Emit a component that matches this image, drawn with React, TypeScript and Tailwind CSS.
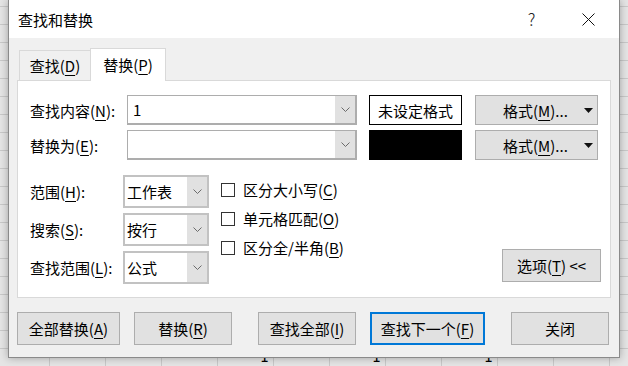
import React from 'react';

const FONT = "font-['Noto_Sans_CJK_SC','Noto_Sans',sans-serif]";

const Key = ({ k }: { k: string }) => <span className="underline underline-offset-[3px] decoration-1">{k}</span>;

const Chevron = () => (
  <svg width="9" height="5" viewBox="0 0 9 5">
    <polyline points="0.5,0.5 4.5,4.5 8.5,0.5" fill="none" stroke="#6b6b6b" strokeWidth="1" />
  </svg>
);

const Caret = () => (
  <svg width="9" height="5" viewBox="0 0 9 5">
    <polygon points="0,0 9,0 4.5,5" fill="#111" />
  </svg>
);

const TextCombo = ({ value }: { value?: string }) => (
  <div className="flex h-[30px] w-[230px] border border-[#adadad] border-r-2 border-b-2 bg-white">
    <div className="flex flex-1 items-center pl-[5px] leading-none">{value}</div>
    <div className="flex w-[20px] items-center justify-center bg-[#e1e1e1]">
      <Chevron />
    </div>
  </div>
);

const Combo = ({ value }: { value: string }) => (
  <div className="flex h-[33px] w-[86px] border-2 border-[#c2c2c2] bg-white">
    <div className="flex flex-1 items-center pl-[2px] leading-none">{value}</div>
    <div className="flex w-[20px] items-center justify-center bg-[#e1e1e1]">
      <Chevron />
    </div>
  </div>
);

const FormatButton = () => (
  <div className="flex h-[30px] w-[123px] items-center border border-[#adadad] bg-[#e1e1e1] pl-[27px] pr-[4px] leading-none">
    <span>
      格式(<Key k="M" />)...
    </span>
    <span className="ml-auto flex">
      <Caret />
    </span>
  </div>
);

const Check = ({ children }: { children: React.ReactNode }) => (
  <div className="flex h-[29px] items-center gap-[8px] leading-none">
    <div className="h-[14px] w-[14px] border border-[#333] bg-white" />
    <span>{children}</span>
  </div>
);

const Button = ({ w, main, children }: { w: string; main?: boolean; children: React.ReactNode }) => (
  <div
    className={`flex h-[33px] items-center justify-center bg-[#e1e1e1] leading-none ${w} ${
      main ? 'border-2 border-[#0078d7]' : 'border border-[#adadad]'
    }`}
  >
    {children}
  </div>
);

export default function App() {
  const cols = Array.from({ length: 12 });

  return (
    <div
      className={`relative flex h-[366px] w-[628px] flex-col justify-end overflow-hidden bg-[#e5e5e5] bg-[linear-gradient(to_right,#c9c9c9_1px,transparent_1px),linear-gradient(to_bottom,#c9c9c9_1px,transparent_1px)] bg-[length:56px_18px] bg-[position:49px_6px] text-[15px] text-black ${FONT}`}
    >
      {/* sheet row peeking out under the dialog */}
      <div className="ml-[-7px] flex h-[18px] font-['DejaVu_Sans',sans-serif] text-[14px] leading-[18px]">
        {cols.map((_, i) => (
          <div key={i} className="w-[56px] shrink-0 pr-[4px] text-right">
            {i === 4 || i === 6 || i === 8 ? '1' : ''}
          </div>
        ))}
      </div>

      {/* dialog window */}
      <div className="absolute left-[8px] top-0 flex h-[358px] w-[612px] flex-col border border-t-0 border-[#8a8a8a] bg-[#f0f0f0] shadow-[0_0_8px_rgba(0,0,0,0.3)]">
        {/* title bar */}
        <div className="flex h-[38px] shrink-0 items-center bg-white pl-[9px]">
          <span className="leading-none">查找和替换</span>
          <div className="ml-auto flex h-full">
            <div className="flex w-[57px] items-center justify-center pb-[2px] text-[17px] font-light leading-none text-[#222]">
              ?
            </div>
            <div className="mr-[2px] flex w-[57px] items-center justify-center">
              <svg width="13" height="13" viewBox="0 0 13 13">
                <path d="M0.5 0.5 L12.5 12.5 M12.5 0.5 L0.5 12.5" stroke="#111" strokeWidth="1" />
              </svg>
            </div>
          </div>
        </div>

        <div className="flex flex-col px-[8px]">
          {/* tabs */}
          <div className="mt-[10px] flex h-[32px] items-end pl-[2px]">
            <div className="flex h-[30px] w-[71px] items-center justify-center border-l border-t border-[#d9d9d9] leading-none">
              查找(<Key k="D" />)
            </div>
            <div className="relative z-10 -mb-[1px] flex h-[33px] w-[76px] items-center justify-center border border-b-0 border-[#d9d9d9] bg-white pb-[1px] leading-none">
              替换(<Key k="P" />)
            </div>
          </div>

          {/* panel */}
          <div className="flex h-[218px] flex-col border border-[#d9d9d9] bg-white pl-[12px] pr-[9px] pt-[14px]">
            <div className="flex h-[30px] items-center">
              <div className="w-[97px] leading-none">
                查找内容(<Key k="N" />):
              </div>
              <TextCombo value="1" />
              <div className="ml-[12px] flex h-[30px] w-[93px] items-center justify-center border border-black bg-white leading-none">
                未设定格式
              </div>
              <div className="ml-[13px]">
                <FormatButton />
              </div>
            </div>

            <div className="mt-[5px] flex h-[30px] items-center">
              <div className="w-[97px] leading-none">
                替换为(<Key k="E" />):
              </div>
              <TextCombo />
              <div className="ml-[12px] h-[30px] w-[93px] bg-black" />
              <div className="ml-[13px]">
                <FormatButton />
              </div>
            </div>

            <div className="mt-[15px] flex">
              <div className="flex flex-col gap-[5px]">
                <div className="flex items-center">
                  <div className="w-[93px] leading-none">
                    范围(<Key k="H" />):
                  </div>
                  <Combo value="工作表" />
                </div>
                <div className="flex items-center">
                  <div className="w-[93px] leading-none">
                    搜索(<Key k="S" />):
                  </div>
                  <Combo value="按行" />
                </div>
                <div className="flex items-center">
                  <div className="w-[93px] leading-none">
                    查找范围(<Key k="L" />):
                  </div>
                  <Combo value="公式" />
                </div>
              </div>

              <div className="ml-[12px] flex flex-col">
                <Check>
                  区分大小写(<Key k="C" />)
                </Check>
                <Check>
                  单元格匹配(<Key k="O" />)
                </Check>
                <Check>
                  区分全/半角(<Key k="B" />)
                </Check>
              </div>

              <div className="mb-[2px] ml-auto self-end">
                <Button w="w-[99px]">
                  选项(<Key k="T" />)&nbsp;&lt;&lt;
                </Button>
              </div>
            </div>
          </div>

          {/* bottom buttons */}
          <div className="mt-[14px] flex">
            <Button w="w-[103px]">
              全部替换(<Key k="A" />)
            </Button>
            <div className="ml-[14px]">
              <Button w="w-[98px]">
                替换(<Key k="R" />)
              </Button>
            </div>
            <div className="ml-[26px]">
              <Button w="w-[98px]">
                查找全部(<Key k="I" />)
              </Button>
            </div>
            <div className="ml-[14px]">
              <Button w="w-[115px]" main>
                查找下一个(<Key k="F" />)
              </Button>
            </div>
            <div className="ml-[26px]">
              <Button w="w-[98px]">关闭</Button>
            </div>
          </div>
        </div>
      </div>
    </div>
  );
}
